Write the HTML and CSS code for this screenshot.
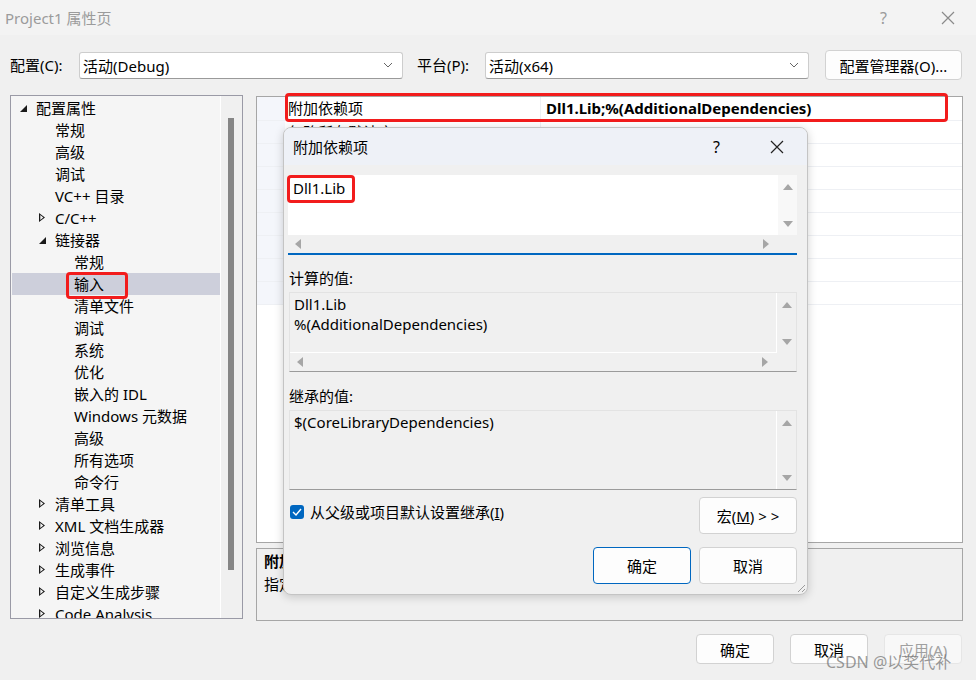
FILE: index.html
```html
<!DOCTYPE html>
<html lang="zh-CN">
<head>
  <meta charset="UTF-8" />
  <title>Project1 属性页</title>
  <link rel="stylesheet" href="styles.css">
</head>
<body>
  <div class="window">
    <div class="titlebar">
      <span class="title">Project1 属性页</span>
      <span class="tb-help">?</span>
      <svg class="tb-close" width="14" height="14" viewBox="0 0 14 14"><path d="M1 1L13 13M13 1L1 13" stroke="#8a8a8a" stroke-width="1.2"/></svg>
    </div>

    <div class="toolbar">
      <span class="tb-label">配置(C):</span>
      <div class="combo">
        <span>活动(Debug)</span>
        <svg width="10" height="6" viewBox="0 0 10 6"><path d="M1 1L5 5L9 1" fill="none" stroke="#666" stroke-width="1"/></svg>
      </div>
      <span class="tb-label second">平台(P):</span>
      <div class="combo">
        <span>活动(x64)</span>
        <svg width="10" height="6" viewBox="0 0 10 6"><path d="M1 1L5 5L9 1" fill="none" stroke="#666" stroke-width="1"/></svg>
      </div>
      <button class="btn mgr">配置管理器(O)...</button>
    </div>

    <div class="main">
      <div class="tree">
        <div class="tree-list">
          <div class="node l0"><span class="arr open"></span>配置属性</div>
          <div class="node l1"><span class="arr"></span>常规</div>
          <div class="node l1"><span class="arr"></span>高级</div>
          <div class="node l1"><span class="arr"></span>调试</div>
          <div class="node l1"><span class="arr"></span>VC++ 目录</div>
          <div class="node l1"><span class="arr closed"></span>C/C++</div>
          <div class="node l1"><span class="arr open"></span>链接器</div>
          <div class="node l2"><span class="arr"></span>常规</div>
          <div class="node l2 selected"><span class="arr"></span><span class="mark mark-tree">输入</span></div>
          <div class="node l2"><span class="arr"></span>清单文件</div>
          <div class="node l2"><span class="arr"></span>调试</div>
          <div class="node l2"><span class="arr"></span>系统</div>
          <div class="node l2"><span class="arr"></span>优化</div>
          <div class="node l2"><span class="arr"></span>嵌入的 IDL</div>
          <div class="node l2"><span class="arr"></span>Windows 元数据</div>
          <div class="node l2"><span class="arr"></span>高级</div>
          <div class="node l2"><span class="arr"></span>所有选项</div>
          <div class="node l2"><span class="arr"></span>命令行</div>
          <div class="node l1"><span class="arr closed"></span>清单工具</div>
          <div class="node l1"><span class="arr closed"></span>XML 文档生成器</div>
          <div class="node l1"><span class="arr closed"></span>浏览信息</div>
          <div class="node l1"><span class="arr closed"></span>生成事件</div>
          <div class="node l1"><span class="arr closed"></span>自定义生成步骤</div>
          <div class="node l1"><span class="arr closed"></span>Code Analysis</div>
        </div>
        <div class="vscroll"><div class="thumb"></div></div>
      </div>

      <div class="right">
        <div class="grid">
          <div class="row first"><span class="gutter"></span><span class="name">附加依赖项</span><span class="value bold">Dll1.Lib;%(AdditionalDependencies)</span></div>
          <div class="row"><span class="gutter"></span><span class="name">忽略所有默认库</span><span class="value"></span></div>
          <div class="row"><span class="gutter"></span><span class="name">忽略特定默认库</span><span class="value"></span></div>
          <div class="row"><span class="gutter"></span><span class="name">模块定义文件</span><span class="value"></span></div>
          <div class="row"><span class="gutter"></span><span class="name">将模块添加到程序集</span><span class="value"></span></div>
          <div class="row"><span class="gutter"></span><span class="name">嵌入托管资源文件</span><span class="value"></span></div>
          <div class="row"><span class="gutter"></span><span class="name">强制符号引用</span><span class="value"></span></div>
          <div class="row"><span class="gutter"></span><span class="name">延迟加载的 DLL</span><span class="value"></span></div>
          <div class="row"><span class="gutter"></span><span class="name">程序集链接资源</span><span class="value"></span></div>
          <div class="redbox"></div>
        </div>
        <div class="desc">
          <div class="desc-title">附加依赖项</div>
          <div>指定要添加到链接命令行的附加项。</div>
        </div>
      </div>
    </div>

    <div class="footer">
      <button class="btn foot">确定</button>
      <button class="btn foot">取消</button>
      <button class="btn foot disabled">应用(A)</button>
    </div>

    <!-- 附加依赖项 dialog -->
    <div class="dialog">
      <div class="dlg-title">
        <span class="dlg-name">附加依赖项</span>
        <span class="dlg-help">?</span>
        <svg class="dlg-close" width="14" height="14" viewBox="0 0 14 14"><path d="M1 1L13 13M13 1L1 13" stroke="#222" stroke-width="1.2"/></svg>
      </div>
      <div class="dlg-body">
        <div class="box edit">
          <div class="box-top">
            <div class="box-text"><span class="mark mark-dll">Dll1.Lib</span></div>
            <div class="sb-v"><span class="up"></span><span class="down"></span></div>
          </div>
          <div class="sb-h"><span class="left"></span><span class="right-a"></span></div>
        </div>

        <div class="dlg-label">计算的值:</div>
        <div class="box ro">
          <div class="box-top">
            <div class="box-text">Dll1.Lib<br>%(AdditionalDependencies)</div>
            <div class="sb-v"><span class="up"></span><span class="down"></span></div>
          </div>
          <div class="sb-h"><span class="left"></span><span class="right-a"></span></div>
        </div>

        <div class="dlg-label second">继承的值:</div>
        <div class="box ro tall">
          <div class="box-top">
            <div class="box-text">$(CoreLibraryDependencies)</div>
            <div class="sb-v"><span class="up"></span><span class="down"></span></div>
          </div>
        </div>

        <div class="dlg-row">
          <label class="check">
            <span class="checkbox"><svg width="10" height="8" viewBox="0 0 10 8"><path d="M1 4L4 7L9 1" fill="none" stroke="#fff" stroke-width="1.4"/></svg></span>
            <span>从父级或项目默认设置继承(<u>I</u>)</span>
          </label>
          <button class="btn dlg-btn">宏(<u>M</u>) &gt; &gt;</button>
        </div>

        <div class="dlg-actions">
          <button class="btn dlg-btn default">确定</button>
          <button class="btn dlg-btn">取消</button>
        </div>
      </div>
      <svg class="grip" width="10" height="10" viewBox="0 0 10 10"><path d="M9 2L2 9M9 6L6 9" stroke="#9a9a9a" stroke-width="1"/></svg>
    </div>

    <div class="watermark">CSDN @以奖代补</div>
  </div>
</body>
</html>
```

FILE: styles.css
```css
body {
  margin: 0;
  background: #f0f0f0;
  font-family: "Noto Sans", "Noto Sans CJK SC", sans-serif;
  font-size: 15px;
  color: #000;
}

.window {
  position: relative;
  width: 976px;
  height: 680px;
  overflow: hidden;
}

button {
  font-family: inherit;
  font-size: 15px;
  color: #000;
}

.btn {
  background: #fdfdfd;
  border: 1px solid #d2d2d2;
  border-radius: 4px;
  padding: 0;
}

/* title bar */

.titlebar {
  height: 35px;
  background: #f3f3f3;
  display: flex;
  align-items: center;
  padding-left: 5px;
  color: #9b9b9b;
}

.title {
  flex: 1;
  line-height: 20px;
}

.tb-help {
  width: 14px;
  margin-right: 47px;
  font-size: 16px;
}

.tb-close {
  margin-right: 21px;
}

/* toolbar */

.toolbar {
  height: 60px;
  display: flex;
  align-items: center;
  padding-left: 10px;
}

.tb-label {
  width: 69px;
  line-height: 20px;
}

.tb-label.second {
  width: 68px;
  margin-left: 14px;
}

.combo {
  width: 324px;
  height: 27px;
  box-sizing: border-box;
  background: #fff;
  border: 1px solid #cdcdcd;
  border-bottom-color: #9a9a9a;
  border-radius: 3px;
  display: flex;
  align-items: center;
  justify-content: space-between;
  padding: 0 9px 0 3px;
}

.mgr {
  width: 137px;
  height: 30px;
  margin-left: 16px;
}

/* main area */

.main {
  display: flex;
  gap: 13px;
  padding-left: 10px;
}

.tree {
  width: 233px;
  height: 524px;
  box-sizing: border-box;
  border: 1px solid #9a9aa6;
  background: #f5f5f5;
  display: flex;
  overflow: hidden;
}

.tree-list {
  flex: 1;
  padding-top: 1px;
  padding-left: 1px;
}

.node {
  height: 22px;
  line-height: 22px;
  display: flex;
  align-items: center;
  white-space: nowrap;
}

.node.l0 { padding-left: 8px; }
.node.l1 { padding-left: 27px; }
.node.l2 { padding-left: 46px; }

.node.selected {
  background: #cdcfdb;
}

.arr {
  width: 16px;
  height: 22px;
  flex-shrink: 0;
  position: relative;
}

.arr.open::before {
  content: "";
  position: absolute;
  left: 0;
  top: 8px;
  border-left: 7px solid transparent;
  border-bottom: 7px solid #1a1a1a;
}

.arr.closed::before {
  content: "";
  position: absolute;
  left: 0;
  top: 6px;
  width: 6px;
  height: 9px;
  background: #1a1a1a;
  clip-path: polygon(0 0, 100% 50%, 0 100%, 0 0, 1.3px 2px, 1.3px 7px, 4.3px 4.5px, 1.3px 2px);
}

.vscroll {
  width: 21px;
  background: #f0f0f0;
  border-left: 1px solid #fff;
  padding-top: 22px;
  display: flex;
  justify-content: center;
}

.thumb {
  width: 6px;
  height: 452px;
  background: #868686;
  margin-left: -1px;
}

.mark {
  position: relative;
  display: inline-block;
  line-height: 22px;
}

.mark::after {
  content: "";
  position: absolute;
  border: 3px solid #f21c1c;
  border-radius: 4px;
}

.mark-tree::after {
  left: -8px;
  right: -24px;
  top: -1px;
  bottom: -4px;
}

.mark-dll::after {
  left: -6px;
  right: -10px;
  top: -2px;
  bottom: -4px;
}

.right {
  width: 707px;
  padding-top: 1px;
  display: flex;
  flex-direction: column;
  gap: 5px;
}

.grid {
  position: relative;
  height: 447px;
  box-sizing: border-box;
  border: 1px solid #a6a6a6;
  background: #fff;
}

.row {
  height: 23px;
  display: flex;
  border-bottom: 1px solid #eef0f4;
  box-sizing: border-box;
}

.row.first {
  height: 24px;
}

.gutter {
  width: 28px;
  background: #f4f6fb;
}

.name {
  width: 256px;
  padding-left: 3px;
  box-sizing: border-box;
  line-height: 22px;
  border-right: 1px solid #eef0f4;
  white-space: nowrap;
  overflow: hidden;
}

.value {
  flex: 1;
  padding-left: 5px;
  line-height: 22px;
}

.bold {
  font-weight: bold;
}

.redbox {
  position: absolute;
  left: 28px;
  top: -4px;
  width: 663px;
  height: 29px;
  box-sizing: border-box;
  border: 3px solid #f21c1c;
  border-radius: 4px;
}

.desc {
  height: 73px;
  box-sizing: border-box;
  border: 1px solid #a6a6a6;
  padding: 1px 7px;
  line-height: 23px;
}

.desc-title {
  font-weight: bold;
}

.footer {
  display: flex;
  justify-content: flex-end;
  gap: 16px;
  padding: 13px 14px 0 0;
}

.foot {
  width: 78px;
  height: 30px;
}

.foot.disabled {
  color: #a0a0a0;
  border-color: #e6e6e6;
  background: #f8f8f8;
}

/* dialog */

.dialog {
  position: absolute;
  left: 283px;
  top: 127px;
  width: 525px;
  height: 468px;
  box-sizing: border-box;
  background: #f0f0f0;
  border: 1px solid #c4c4c4;
  border-radius: 8px;
  box-shadow: 0 2px 10px rgba(0, 0, 0, 0.18);
  overflow: hidden;
}

.dlg-title {
  height: 37px;
  background: #eef1f7;
  display: flex;
  align-items: center;
  padding-left: 9px;
}

.dlg-name {
  flex: 1;
  line-height: 20px;
}

.dlg-help {
  width: 14px;
  margin-right: 43px;
  font-size: 16px;
}

.dlg-close {
  margin-right: 23px;
}

.dlg-body {
  padding: 10px 10px 0 4px;
}

.box {
  height: 80px;
  box-sizing: border-box;
  display: flex;
  flex-direction: column;
}

.box.edit {
  background: #fff;
  border-bottom: 2px solid #0067c0;
}

.box.ro {
  margin-left: 1px;
  border: 1px solid #e3e3e3;
  border-bottom-color: #9b9b9b;
}

.box-top {
  flex: 1;
  display: flex;
}

.box-text {
  flex: 1;
  padding: 2px 5px;
  line-height: 20px;
}

.box.ro .box-text {
  padding: 1px 4px;
  border-right: 1px solid #fff;
  border-bottom: 1px solid #fff;
}

.box.ro.tall .box-text {
  border-bottom: none;
}

.sb-v {
  width: 19px;
  display: flex;
  flex-direction: column;
  align-items: center;
  justify-content: space-between;
  padding: 9px 0 8px;
  box-sizing: border-box;
}

.box.edit .sb-v {
  background: #f8f8f8;
}

.sb-h {
  height: 18px;
  display: flex;
  align-items: center;
  justify-content: space-between;
  padding: 0 28px 0 7px;
  background: #f0f0f0;
}

.up, .down, .left, .right-a {
  width: 0;
  height: 0;
}

.up {
  border-left: 5px solid transparent;
  border-right: 5px solid transparent;
  border-bottom: 6px solid #a6a6a6;
}

.down {
  border-left: 5px solid transparent;
  border-right: 5px solid transparent;
  border-top: 6px solid #a6a6a6;
}

.left {
  border-top: 5px solid transparent;
  border-bottom: 5px solid transparent;
  border-right: 6px solid #a6a6a6;
}

.right-a {
  border-top: 5px solid transparent;
  border-bottom: 5px solid transparent;
  border-left: 6px solid #a6a6a6;
}

.dlg-label {
  padding: 12px 0 3px 1px;
  line-height: 22px;
}

.dlg-label.second {
  padding-top: 13px;
}

.dlg-row {
  display: flex;
  justify-content: space-between;
  align-items: flex-start;
  margin-top: 7px;
}

.check {
  display: flex;
  align-items: center;
  gap: 6px;
  padding: 4px 0 0 2px;
  line-height: 22px;
}

.checkbox {
  width: 14px;
  height: 14px;
  border-radius: 3px;
  background: #0067c0;
  display: flex;
  align-items: center;
  justify-content: center;
}

.dlg-btn {
  width: 98px;
  height: 37px;
}

.dlg-actions {
  display: flex;
  justify-content: flex-end;
  gap: 8px;
  margin-top: 13px;
}

.dlg-btn.default {
  border-color: #0067c0;
}

.grip {
  position: absolute;
  right: 1px;
  bottom: 1px;
}

.watermark {
  position: absolute;
  left: 826px;
  top: 651px;
  font-size: 16px;
  line-height: 22px;
  color: rgba(120, 120, 120, 0.75);
}
```
